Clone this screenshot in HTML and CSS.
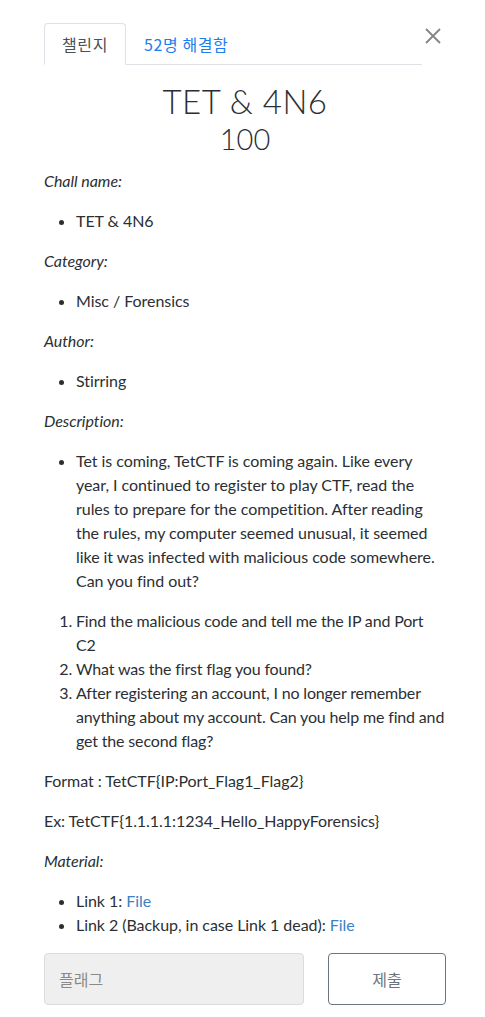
FILE: index.html
```html
<!DOCTYPE html>
<html>
<head>
<meta charset="utf-8">
<link rel="stylesheet" href="styles.css">
</head>
<body>
<div class="modal">
  <div class="head">
    <ul class="tabs">
      <li class="tab active">챌린지</li>
      <li class="tab link">52명 해결함</li>
    </ul>
    <button class="close" aria-label="close">
      <svg width="16" height="16" viewBox="0 0 16 16"><path d="M1 1L15 15M15 1L1 15" stroke="#858585" stroke-width="1.8" fill="none"/></svg>
    </button>
  </div>
  <h2 class="title">TET &amp; 4N6</h2>
  <h3 class="value">100</h3>
  <div class="desc">
    <p><em>Chall name:</em></p>
    <ul><li>TET &amp; 4N6</li></ul>
    <p><em>Category:</em></p>
    <ul><li>Misc / Forensics</li></ul>
    <p><em>Author:</em></p>
    <ul><li>Stirring</li></ul>
    <p><em>Description:</em></p>
    <ul><li>Tet is coming, TetCTF is coming again. Like every year, I continued to register to play CTF, read the rules to prepare for the competition. After reading the rules, my computer seemed unusual, it seemed like it was infected with malicious code somewhere. Can you find out?</li></ul>
    <ol>
      <li>Find the malicious code and tell me the IP and Port C2</li>
      <li>What was the first flag you found?</li>
      <li>After registering an account, I no longer remember anything about my account. Can you help me find and get the second flag?</li>
    </ol>
    <p>Format : TetCTF{IP:Port_Flag1_Flag2}</p>
    <p>Ex: TetCTF{1.1.1.1:1234_Hello_HappyForensics}</p>
    <p><em>Material:</em></p>
    <ul class="tight">
      <li>Link 1: <a href="#">File</a></li>
      <li>Link 2 (Backup, in case Link 1 dead): <a href="#">File</a></li>
    </ul>
  </div>
  <div class="submit-row">
    <input class="flag" type="text" placeholder="플래그">
    <button class="submit">제출</button>
  </div>
</div>
</body>
</html>
```
FILE: styles.css
```css
html, body {
  margin: 0;
  padding: 0;
  background: #fff;
}
body {
  font-family: Lato, "Noto Sans CJK KR", sans-serif;
  color: #2b2f33;
  font-size: 16px;
  line-height: 24px;
}
.modal {
  padding: 23px 24px 0 44px;
  width: 402px;
}
.head {
  display: flex;
  align-items: flex-start;
}
.tabs {
  list-style: none;
  margin: 0;
  padding: 0;
  display: flex;
  width: 378px;
  border-bottom: 1px solid #dee2e6;
}
.tab {
  font-family: "Noto Sans CJK KR", Lato, sans-serif;
  font-size: 16px;
  letter-spacing: 0.6px;
  box-sizing: border-box;
  border: 1px solid transparent;
  border-top-left-radius: 4px;
  border-top-right-radius: 4px;
  margin-bottom: -1px;
}
.tab.active {
  color: #495057;
  border-color: #dee2e6 #dee2e6 #fff;
  background: #fff;
  height: 42px;
  line-height: 40px;
  width: 82px;
  text-align: center;
  padding: 0;
}
.tab.link {
  color: #1a7ef0;
  line-height: 40px;
  height: 42px;
  padding: 0 17px;
}
.close {
  margin-left: auto;
  margin-top: 5px;
  margin-right: 5px;
  background: none;
  border: 0;
  padding: 0;
  width: 16px;
  height: 16px;
  display: block;
}
.title {
  margin: 16px 0 0;
  text-align: center;
  font-weight: 300;
  font-size: 33px;
  line-height: 40px;
  letter-spacing: 0.5px;
}
.value {
  margin: 0 0 12px;
  text-align: center;
  font-weight: 300;
  font-size: 29px;
  line-height: 36px;
}
.desc {
  letter-spacing: -0.05px;
}
.desc ol {
  letter-spacing: -0.16px;
}
.desc p {
  margin: 0 0 16px;
}
.desc ul, .desc ol {
  margin: 0 0 16px;
  padding-left: 32px;
}
.desc a {
  color: #3a81c6;
  text-decoration: none;
}
.submit-row {
  display: flex;
  justify-content: space-between;
  margin-top: 4px;
}
.flag {
  width: 260px;
  height: 52px;
  box-sizing: border-box;
  background: #efefef;
  border: 1px solid #dcdcdc;
  border-radius: 4px;
  padding: 0 14px;
  font-family: "Noto Sans CJK KR", Lato, sans-serif;
  font-size: 16px;
  color: #495057;
  outline: none;
}
.flag::placeholder {
  color: #8a8a8a;
}
.submit {
  width: 118px;
  height: 52px;
  box-sizing: border-box;
  background: #fff;
  border: 1px solid #6c757d;
  border-radius: 4px;
  font-family: "Noto Sans CJK KR", Lato, sans-serif;
  font-size: 16px;
  color: #6c757d;
}
```
